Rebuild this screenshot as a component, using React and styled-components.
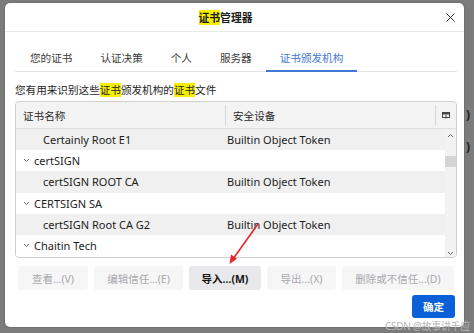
import styled, { createGlobalStyle } from 'styled-components';

const GlobalStyle = createGlobalStyle`
  html, body {
    margin: 0;
    padding: 0;
    background: #7b7b7b;
    font-family: "Noto Sans", "Noto Sans CJK SC", sans-serif;
  }
  * { box-sizing: border-box; }
`;

const Page = styled.div`
  position: relative;
  width: 474px;
  height: 333px;
  overflow: hidden;
  padding: 3px 0 0 5px;
`;

const BackdropMark = styled.span`
  position: absolute;
  left: 466px;
  top: ${p => p.top}px;
  font-size: 12px;
  color: #1a1a1a;
  font-weight: bold;
`;

const Dialog = styled.div`
  position: relative;
  width: 459px;
  height: 324px;
  background: #fff;
  border-radius: 5px;
  display: flex;
  flex-direction: column;
  box-shadow: 0 0 2px rgba(0, 0, 0, 0.3);
`;

const TitleBar = styled.div`
  height: 29px;
  display: grid;
  grid-template-columns: 1fr auto 1fr;
  align-items: center;
  border-bottom: 1px solid #e8e8e8;
`;

const Title = styled.div`
  grid-column: 2;
  font-size: 10.8px;
  font-weight: bold;
  color: #1b1b1b;
  margin-right: 18px;
`;

const Mark = styled.span`
  background: #f6f000;
`;

const CloseButton = styled.div`
  grid-column: 3;
  justify-self: end;
  margin-right: 9px;
  display: flex;
  align-items: center;
`;

const Body = styled.div`
  padding: 0 7px 0 10px;
  display: flex;
  flex-direction: column;
  flex: 1;
`;

const Tabs = styled.div`
  margin-top: 12px;
  display: flex;
  padding-left: 1px;
  border-bottom: 1px solid #e3e3e3;
`;

const Tab = styled.div`
  height: 28px;
  padding: 0 14px;
  display: flex;
  align-items: center;
  font-size: 10.6px;
  color: ${p => (p.active ? '#3f78d4' : '#3a3a3a')};
  border-bottom: 2px solid ${p => (p.active ? '#3f78d4' : 'transparent')};
  margin-bottom: -1px;
`;

const Description = styled.div`
  margin-top: 11px;
  font-size: 10.6px;
  color: #1e1e1e;
  line-height: 14px;
`;

const Table = styled.div`
  position: relative;
  margin-top: 4px;
  width: 442px;
  height: 157px;
  border: 1px solid #cfcfcf;
  border-radius: 4px;
  overflow: hidden;
  background: #fff;
`;

const HeaderRow = styled.div`
  height: 27px;
  display: grid;
  grid-template-columns: 210px 210px 1fr;
  align-items: center;
  background: #f3f3f3;
  border-bottom: 1px solid #e0e0e0;
`;

const HeaderCell = styled.div`
  height: 21px;
  display: flex;
  align-items: center;
  padding-left: ${p => (p.center ? '0' : '7px')};
  font-size: 10.6px;
  color: #2a2a2a;
  border-right: ${p => (p.divider ? '1px solid #d6d6d6' : 'none')};
  justify-content: ${p => (p.center ? 'center' : 'flex-start')};
`;

const Row = styled.div`
  height: 21.2px;
  display: grid;
  grid-template-columns: 210px 1fr;
  align-items: center;
  background: ${p => (p.shaded ? '#f0f0f0' : '#fff')};
  font-size: 11px;
  color: #1c1c1c;
  padding-right: 11px;
`;

const NameCell = styled.div`
  display: flex;
  align-items: center;
  gap: 4px;
  padding-left: ${p => (p.child ? '27px' : '7px')};
  white-space: nowrap;
`;

const DeviceCell = styled.div`
  padding-left: 1px;
  white-space: nowrap;
`;

const Scrollbar = styled.div`
  position: absolute;
  right: 0;
  top: 28px;
  bottom: 0;
  width: 11px;
  background: #f2f2f2;
  display: flex;
  flex-direction: column;
  align-items: center;
  justify-content: space-between;
  padding: 3px 0 1px;
`;

const Thumb = styled.div`
  position: absolute;
  left: 0;
  top: 26px;
  width: 11px;
  height: 11px;
  background: #d4d4d4;
`;

const ButtonRow = styled.div`
  margin-top: 8px;
  display: flex;
  gap: 6px;
  padding-left: 3px;
`;

const ActionButton = styled.div`
  height: 24px;
  width: ${p => p.w}px;
  border-radius: 3px;
  display: flex;
  align-items: center;
  justify-content: center;
  font-size: 10.5px;
  white-space: nowrap;
  background: ${p => (p.enabled ? '#e9e9eb' : '#f6f6f7')};
  color: ${p => (p.enabled ? '#151515' : '#a9a9ad')};
  font-weight: ${p => (p.enabled ? 'bold' : 'normal')};
`;

const Footer = styled.div`
  margin-top: 5px;
  display: flex;
  justify-content: flex-end;
  padding-right: 2px;
`;

const OkButton = styled.div`
  width: 43px;
  height: 23px;
  border-radius: 3px;
  background: #0b60d8;
  color: #fff;
  font-size: 10.6px;
  font-weight: bold;
  display: flex;
  align-items: center;
  justify-content: center;
`;

const Arrow = styled.svg`
  position: absolute;
  left: 0;
  top: 0;
  pointer-events: none;
`;

const Watermark = styled.div`
  position: absolute;
  left: 385px;
  top: 318px;
  font-size: 10px;
  color: #b8b8b8;
  white-space: nowrap;
  letter-spacing: -0.3px;
`;

const Chevron = ({ up }) => (
  <svg width="7" height="5" viewBox="0 0 7 5">
    <path
      d={up ? 'M1 4 L3.5 1.5 L6 4' : 'M1 1 L3.5 3.5 L6 1'}
      fill="none"
      stroke="#666"
      strokeWidth="1"
    />
  </svg>
);

const ColumnIcon = () => (
  <svg width="8" height="7" viewBox="0 0 8 7">
    <rect x="0.5" y="0.5" width="7" height="5" fill="none" stroke="#444" />
    <rect x="0.5" y="0.5" width="7" height="2" fill="#444" />
    <path d="M4 3 L4 6.5" stroke="#444" />
  </svg>
);

export default function App() {
  const tabs = ['您的证书', '认证决策', '个人', '服务器', '证书颁发机构'];

  const rows = [
    { name: 'Certainly Root E1', device: 'Builtin Object Token', child: true },
    { name: 'certSIGN' },
    { name: 'certSIGN ROOT CA', device: 'Builtin Object Token', child: true },
    { name: 'CERTSIGN SA' },
    { name: 'certSIGN Root CA G2', device: 'Builtin Object Token', child: true },
    { name: 'Chaitin Tech' }
  ];

  const buttons = [
    { label: '查看...(V)', w: 70 },
    { label: '编辑信任...(E)', w: 89 },
    { label: '导入...(M)', w: 72, enabled: true },
    { label: '导出...(X)', w: 69 },
    { label: '删除或不信任...(D)', w: 112 }
  ];

  return (
    <Page>
      <GlobalStyle />
      <BackdropMark top={106}>)</BackdropMark>
      <BackdropMark top={138}>)</BackdropMark>
      <Dialog>
        <TitleBar>
          <Title><Mark>证书</Mark>管理器</Title>
          <CloseButton>
            <svg width="9" height="9" viewBox="0 0 9 9">
              <path d="M0.5 0.5 L8.5 8.5 M8.5 0.5 L0.5 8.5" stroke="#333" strokeWidth="1" />
            </svg>
          </CloseButton>
        </TitleBar>
        <Body>
          <Tabs>
            {tabs.map((t, i) => (
              <Tab key={t} active={i === tabs.length - 1}>{t}</Tab>
            ))}
          </Tabs>
          <Description>
            您有用来识别这些<Mark>证书</Mark>颁发机构的<Mark>证书</Mark>文件
          </Description>
          <Table>
            <HeaderRow>
              <HeaderCell divider>证书名称</HeaderCell>
              <HeaderCell divider>安全设备</HeaderCell>
              <HeaderCell center><ColumnIcon /></HeaderCell>
            </HeaderRow>
            {rows.map(r => (
              <Row key={r.name} shaded={r.child}>
                <NameCell child={r.child}>
                  {!r.child && <Chevron />}
                  {r.name}
                </NameCell>
                <DeviceCell>{r.device}</DeviceCell>
              </Row>
            ))}
            <Scrollbar>
              <Chevron up />
              <Thumb />
              <Chevron />
            </Scrollbar>
          </Table>
          <ButtonRow>
            {buttons.map(b => (
              <ActionButton key={b.label} w={b.w} enabled={b.enabled}>{b.label}</ActionButton>
            ))}
          </ButtonRow>
          <Footer>
            <OkButton>确定</OkButton>
          </Footer>
        </Body>
      </Dialog>
      <Arrow width="474" height="333">
        <path d="M258 224 L233 259" stroke="#e3262b" strokeWidth="1.6" fill="none" />
        <path d="M229.5 264 L231 254.5 L237 258.8 Z" fill="#e3262b" />
      </Arrow>
      <Watermark>CSDN @故事讲千应</Watermark>
    </Page>
  );
}
